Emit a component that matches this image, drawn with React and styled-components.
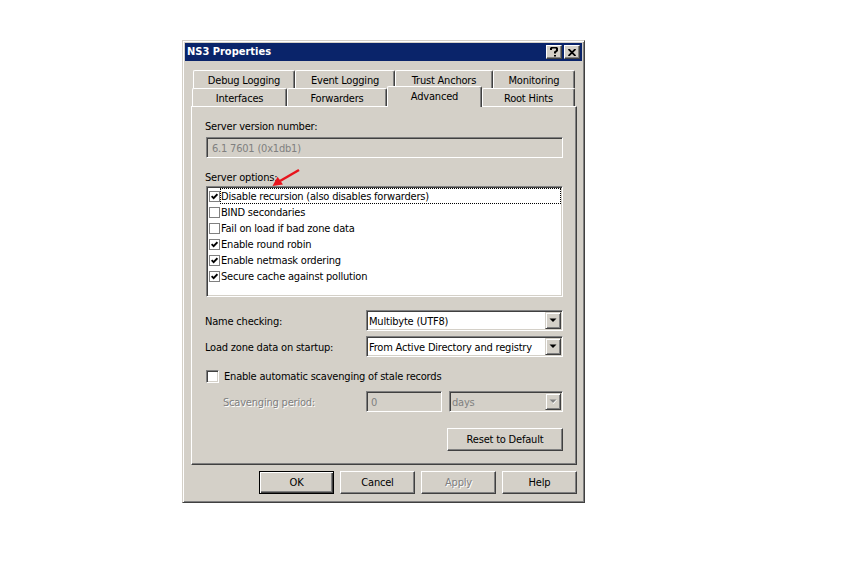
import React from "react";
import styled, { createGlobalStyle } from "styled-components";

const GlobalStyle = createGlobalStyle`
  html, body {
    margin: 0;
    background: #fff;
  }
  body {
    font-family: "DejaVu Sans Condensed", "Liberation Sans", sans-serif;
    font-size: 11px;
    letter-spacing: -0.2px;
    color: #000;
  }
`;

const Page = styled.div`
  position: relative;
  width: 844px;
  height: 587px;
  box-sizing: border-box;
  padding: 40px 0 0 182px;
`;

const Window = styled.div`
  width: 403px;
  height: 463px;
  box-sizing: border-box;
  background: #d4d0c8;
  border: 1px solid;
  border-color: #d4d0c8 #404040 #404040 #d4d0c8;
  box-shadow: inset 1px 1px #fff, inset -1px -1px #808080;
  padding: 2px;
  display: flex;
  flex-direction: column;
`;

const TitleBar = styled.div`
  height: 18px;
  background: #0a246a;
  color: #fff;
  font-weight: bold;
  letter-spacing: 0;
  display: flex;
  align-items: center;
  padding: 0 2px 0 2px;
`;

const TitleText = styled.div`
  flex: 1;
  line-height: 18px;
`;

const CaptionButton = styled.div`
  width: 16px;
  height: 14px;
  box-sizing: border-box;
  background: #d4d0c8;
  border: 1px solid;
  border-color: #fff #404040 #404040 #fff;
  box-shadow: inset -1px -1px #808080;
  margin-left: ${(p) => (p.$gap ? "2px" : "0")};
  display: flex;
  align-items: center;
  justify-content: center;
  color: #000;
`;

const Body = styled.div`
  display: flex;
  flex-direction: column;
  padding: 9px 5px 0 6px;
`;

const TabArea = styled.div`
  display: flex;
  flex-direction: column;
  height: 36px;
`;

const TabRow = styled.div`
  display: flex;
  align-items: flex-start;
  height: 18px;
  padding-left: ${(p) => p.$indent}px;
`;

const Tab = styled.div`
  box-sizing: border-box;
  width: ${(p) => p.$w}px;
  height: ${(p) => (p.$active ? 21 : 18)}px;
  margin-top: ${(p) => (p.$active ? -2 : 0)}px;
  position: relative;
  z-index: ${(p) => (p.$active ? 2 : 0)};
  background: #d4d0c8;
  border-top: 1px solid #fff;
  border-left: 1px solid #fff;
  border-right: 1px solid #404040;
  border-radius: 2px 2px 0 0;
  box-shadow: inset -1px 0 #808080;
  display: flex;
  justify-content: center;
  padding-top: 3px;
  line-height: 13px;
`;

const Panel = styled.div`
  width: 386px;
  height: 359px;
  box-sizing: border-box;
  border: 1px solid;
  border-color: #fff #404040 #404040 #fff;
  box-shadow: inset -1px -1px #808080;
  padding: 13px 13px 0 13px;
  display: flex;
  flex-direction: column;
`;

const Label = styled.div`
  line-height: 13px;
  margin-top: ${(p) => p.$mt || 0}px;
  white-space: nowrap;
`;

const Field = styled.div`
  box-sizing: border-box;
  height: 21px;
  width: ${(p) => (p.$w ? `${p.$w}px` : "auto")};
  margin-top: ${(p) => p.$mt || 0}px;
  margin-left: ${(p) => p.$ml || 0}px;
  background: ${(p) => (p.$disabled ? "#d4d0c8" : "#fff")};
  color: ${(p) => (p.$disabled ? "#808080" : "#000")};
  border: 1px solid;
  border-color: #808080 #fff #fff #808080;
  box-shadow: inset 1px 1px #404040, inset -1px -1px #d4d0c8;
  display: flex;
  align-items: center;
  padding: 1px 1px 1px ${(p) => p.$pl || 2}px;
  white-space: nowrap;
`;

const ComboText = styled.div`
  flex: 1;
  line-height: 17px;
  padding-top: 1px;
`;

const DropButton = styled.div`
  width: 16px;
  height: 17px;
  box-sizing: border-box;
  background: #d4d0c8;
  border: 1px solid;
  border-color: #d4d0c8 #404040 #404040 #d4d0c8;
  box-shadow: inset 1px 1px #fff, inset -1px -1px #808080;
  display: flex;
  align-items: center;
  justify-content: center;
`;

const ListBox = styled.div`
  box-sizing: border-box;
  height: 111px;
  margin: 2px 0 0 1px;
  background: #fff;
  border: 1px solid;
  border-color: #808080 #fff #fff #808080;
  box-shadow: inset 1px 1px #404040, inset -1px -1px #d4d0c8;
  padding: 1px;
  display: flex;
  flex-direction: column;
`;

const ListItem = styled.div`
  height: 16px;
  display: flex;
  align-items: center;
  padding-left: 1px;
`;

const SmallBox = styled.div`
  width: 11px;
  height: 11px;
  box-sizing: border-box;
  border: 1px solid #808080;
  background: #fff;
  display: flex;
  align-items: center;
  justify-content: center;
  margin-top: 1px;
`;

const ItemText = styled.div`
  flex: 1;
  height: 16px;
  box-sizing: border-box;
  line-height: 13px;
  padding: 2px 0 0 1px;
  outline: ${(p) => (p.$focus ? "1px dotted #000" : "none")};
  outline-offset: -1px;
  white-space: nowrap;
`;

const FormRow = styled.div`
  display: flex;
  align-items: center;
  margin-top: ${(p) => p.$mt || 0}px;
`;

const RowLabel = styled.div`
  width: ${(p) => p.$w}px;
  padding-left: ${(p) => p.$indent || 0}px;
  padding-top: 1px;
  box-sizing: border-box;
  color: ${(p) => (p.$disabled ? "#808080" : "#000")};
  text-shadow: ${(p) => (p.$disabled ? "1px 1px #fff" : "none")};
  white-space: nowrap;
`;

const BigBox = styled.div`
  width: 13px;
  height: 13px;
  box-sizing: border-box;
  background: #fff;
  border: 1px solid;
  border-color: #808080 #fff #fff #808080;
  box-shadow: inset 1px 1px #404040, inset -1px -1px #d4d0c8;
  margin: 0 5px 0 1px;
`;

const CheckText = styled.span`
  padding-top: 1px;
`;

const Button = styled.div`
  width: ${(p) => p.$w || 75}px;
  height: 23px;
  box-sizing: border-box;
  background: #d4d0c8;
  border: 1px solid;
  border-color: ${(p) => (p.$default ? "#000" : "#fff #404040 #404040 #fff")};
  box-shadow: ${(p) =>
    p.$default
      ? "inset 1px 1px #fff, inset -1px -1px #404040, inset -2px -2px #808080"
      : "inset -1px -1px #808080"};
  display: flex;
  align-items: center;
  justify-content: center;
  color: ${(p) => (p.$disabled ? "#808080" : "#000")};
  text-shadow: ${(p) => (p.$disabled ? "1px 1px #fff" : "none")};
`;

const ResetRow = styled.div`
  display: flex;
  justify-content: flex-end;
  margin-top: 16px;
`;

const ButtonRow = styled.div`
  display: flex;
  justify-content: flex-end;
  margin-top: 6px;
  gap: 6px;
`;

const Arrow = styled.svg`
  position: absolute;
  left: 268px;
  top: 166px;
  pointer-events: none;
`;

const Check = () => (
  <svg width="7" height="7" viewBox="0 0 7 7">
    <polyline points="0.6,3.2 2.6,5.2 6.4,1.2" fill="none" stroke="#000" strokeWidth="1.8" />
  </svg>
);

const Triangle = ({ disabled }) => (
  <svg width="8" height="5" viewBox="0 0 8 5">
    {disabled && <polygon points="1,1 8,1 4.5,5" fill="#fff" />}
    <polygon points="0.5,0.5 7.5,0.5 4,4" fill={disabled ? "#808080" : "#000"} />
  </svg>
);

const Combo = ({ value, w, disabled, ml }) => (
  <Field $w={w} $disabled={disabled} $ml={ml} $pl={2}>
    <ComboText>{value}</ComboText>
    <DropButton>
      <Triangle disabled={disabled} />
    </DropButton>
  </Field>
);

const options = [
  { label: "Disable recursion (also disables forwarders)", checked: true, focus: true },
  { label: "BIND secondaries", checked: false },
  { label: "Fail on load if bad zone data", checked: false },
  { label: "Enable round robin", checked: true },
  { label: "Enable netmask ordering", checked: true },
  { label: "Secure cache against pollution", checked: true },
];

const topTabs = [
  { label: "Debug Logging", w: 102 },
  { label: "Event Logging", w: 100 },
  { label: "Trust Anchors", w: 98 },
  { label: "Monitoring", w: 82 },
];

const bottomTabs = [
  { label: "Interfaces", w: 95 },
  { label: "Forwarders", w: 100 },
  { label: "Advanced", w: 95, active: true },
  { label: "Root Hints", w: 93 },
];

export default function App() {
  return (
    <Page>
      <GlobalStyle />
      <Window>
        <TitleBar>
          <TitleText>NS3 Properties</TitleText>
          <CaptionButton>
            <svg width="8" height="10" viewBox="0 0 8 10">
              <path d="M1 3 V1.5 L2 0.5 H6 L7 1.5 V3.5 L5 5.2 V6.5 M5 8 V9.5" fill="none" stroke="#000" strokeWidth="2" />
            </svg>
          </CaptionButton>
          <CaptionButton $gap>
            <svg width="8" height="7" viewBox="0 0 8 7">
              <path d="M0.5 0 L7.5 7 M7.5 0 L0.5 7" stroke="#000" strokeWidth="1.8" />
            </svg>
          </CaptionButton>
        </TitleBar>
        <Body>
          <TabArea>
            <TabRow $indent={2}>
              {topTabs.map((t) => (
                <Tab key={t.label} $w={t.w}>
                  {t.label}
                </Tab>
              ))}
            </TabRow>
            <TabRow $indent={1}>
              {bottomTabs.map((t) => (
                <Tab key={t.label} $w={t.w} $active={t.active}>
                  {t.label}
                </Tab>
              ))}
            </TabRow>
          </TabArea>
          <Panel>
            <Label>Server version number:</Label>
            <Field $mt={4} $ml={1} $disabled $pl={5}>
              <ComboText>6.1 7601 (0x1db1)</ComboText>
            </Field>
            <Label $mt={13}>Server options:</Label>
            <ListBox>
              {options.map((o) => (
                <ListItem key={o.label}>
                  <SmallBox>{o.checked && <Check />}</SmallBox>
                  <ItemText $focus={o.focus}>{o.label}</ItemText>
                </ListItem>
              ))}
            </ListBox>
            <FormRow $mt={13}>
              <RowLabel $w={161}>Name checking:</RowLabel>
              <Combo value="Multibyte (UTF8)" w={197} />
            </FormRow>
            <FormRow $mt={5}>
              <RowLabel $w={161}>Load zone data on startup:</RowLabel>
              <Combo value="From Active Directory and registry" w={197} />
            </FormRow>
            <FormRow $mt={12}>
              <BigBox />
              <CheckText>Enable automatic scavenging of stale records</CheckText>
            </FormRow>
            <FormRow $mt={8}>
              <RowLabel $w={161} $indent={18} $disabled>
                Scavenging period:
              </RowLabel>
              <Field $w={76} $disabled $pl={4}>
                <ComboText>0</ComboText>
              </Field>
              <Combo value="days" w={114} disabled ml={7} />
            </FormRow>
            <ResetRow>
              <Button $w={116}>Reset to Default</Button>
            </ResetRow>
          </Panel>
          <ButtonRow>
            <Button $default>OK</Button>
            <Button>Cancel</Button>
            <Button $disabled>Apply</Button>
            <Button>Help</Button>
          </ButtonRow>
        </Body>
      </Window>
      <Arrow width="34" height="22" viewBox="268 166 34 22">
        <line x1="299" y1="170" x2="280" y2="181" stroke="#e8141c" strokeWidth="2.5" />
        <polygon points="272.5,186 277.6,176.8 283,184.6" fill="#e8141c" />
      </Arrow>
    </Page>
  );
}
